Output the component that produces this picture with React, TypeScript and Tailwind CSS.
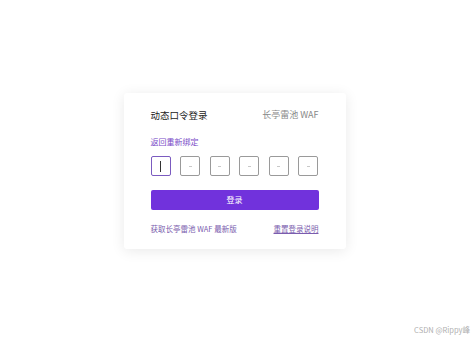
export default function App() {
  const slots = [0, 1, 2, 3, 4, 5]

  return (
    <div
      className="relative flex h-[339px] w-[474px] items-start justify-center bg-white pt-[93px]"
      style={{ fontFamily: '"Noto Sans CJK SC", "Noto Sans", sans-serif' }}
    >
      <div className="ml-[-5px] flex h-[156px] w-[222px] flex-col rounded-[3px] bg-white px-[27px] pt-[15px] shadow-[0_2px_14px_rgba(0,0,0,0.09)]">
        <div className="flex items-center justify-between">
          <p className="text-[9.5px] text-[#222]">动态口令登录</p>
          <p className="text-[9px] text-[#888]">长亭雷池 WAF</p>
        </div>

        <p className="mt-[14px] text-[8px] text-[#7a4cc8]">返回重新绑定</p>

        <div className="mt-[8px] flex justify-between">
          {slots.map((slot) => (
            <div
              key={slot}
              className={
                slot === 0
                  ? 'flex h-[20px] w-[20px] items-center justify-center rounded-[2px] border border-[#7b5bc0]'
                  : 'flex h-[20px] w-[20px] items-center justify-center rounded-[2px] border border-[#9a9a9a]'
              }
            >
              {slot === 0 ? (
                <span className="h-[11px] w-px bg-[#333]" />
              ) : (
                <span className="h-px w-[3px] bg-[#c8c8c8]" />
              )}
            </div>
          ))}
        </div>

        <button className="mt-[14px] flex h-[20px] w-full items-center justify-center rounded-[2px] bg-[#7132dc] text-[8px] text-white">
          登录
        </button>

        <div className="mt-[13px] flex items-center justify-between text-[7.5px] text-[#7a5cae]">
          <span>获取长亭雷池 WAF 最新版</span>
          <span className="underline underline-offset-1">重置登录说明</span>
        </div>
      </div>

      <span className="absolute bottom-[4px] right-[4px] text-[7.5px] text-[#b0b0b0]">
        CSDN @Rippy峰
      </span>
    </div>
  )
}
